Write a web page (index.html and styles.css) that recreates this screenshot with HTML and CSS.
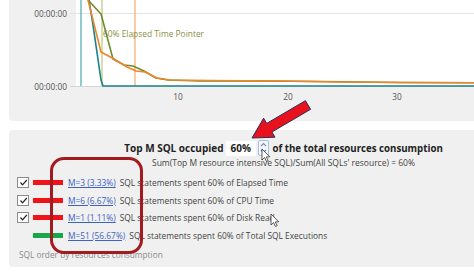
FILE: index.html
```html
<!DOCTYPE html>
<html lang="en">
<head>
    <meta charset="UTF-8">
    <meta name="viewport" content="width=device-width, initial-scale=1.0">
    <title>Top M SQL</title>
    <link rel="stylesheet" href="styles.css">
</head>
<body>
<div class="page">

    <section class="chart-panel">
        <svg class="chart" width="549" height="121" viewBox="9 0 549 121">
            <rect x="76" y="0" width="482" height="86" fill="#fff"/>
            <line x1="70" y1="13.5" x2="558" y2="13.5" class="grid"/>
            <line x1="70" y1="86.5" x2="558" y2="86.5" class="axis"/>

            <text x="67" y="16.5" class="tick" text-anchor="end">00:00:00</text>
            <text x="67" y="89.5" class="tick" text-anchor="end">00:00:00</text>
            <text x="178" y="100" class="tick" text-anchor="middle">10</text>
            <text x="288" y="100" class="tick" text-anchor="middle">20</text>
            <text x="397" y="100" class="tick" text-anchor="middle">30</text>

            <!-- pointers -->
            <line x1="81" y1="0" x2="81" y2="86" stroke="#4aa9ad" stroke-width="1.2"/>
            <line x1="102" y1="0" x2="102" y2="86" stroke="#b4bb5c" stroke-width="1"/>
            <line x1="135" y1="0" x2="135" y2="86" stroke="#f5ab6a" stroke-width="1.2"/>
            <text x="103" y="37" class="pointer-label">60% Elapsed Time Pointer</text>

            <!-- series -->
            <polyline class="series" stroke="#1b8287"
                points="89,0 93,25 101,80 103,86 558,86"/>
            <polyline class="series" stroke="#6f8c2c"
                points="88,0 101,14 113,59 124,65 133,66 144,71 156,78 168,80 200,81 260,81 320,81.5 360,82 400,82.5 558,83"/>
            <polyline class="series" stroke="#f0842a"
                points="88,0 101,52 114,59 127,67 136,71 145,72 157,78 170,80 210,80.5 280,81 340,82 400,82.5 558,83"/>
        </svg>
    </section>

    <section class="topm-panel">
        <div class="topm-title">
            <span>Top M SQL occupied</span>
            <span class="pct-input">60%</span>
            <span class="spinner">
                <svg width="9" height="14" viewBox="0 0 9 14">
                    <polyline points="2,5 4.5,2.5 7,5" fill="none" stroke="#7a8da8" stroke-width="1.1"/>
                    <polyline points="2,9 4.5,11.5 7,9" fill="none" stroke="#4d78c0" stroke-width="1.1"/>
                </svg>
            </span>
            <span class="title-rest">of the total resources consumption</span>
        </div>
        <div class="topm-formula">Sum(Top M resource intensive SQL)/Sum(All SQLs' resource) = 60%</div>

        <ul class="topm-list">
            <li class="topm-row">
                <span class="check"><svg width="9" height="9" viewBox="0 0 9 9"><polyline points="1.5,4.5 3.5,6.8 7.8,2" fill="none" stroke="#222" stroke-width="1.2"/></svg></span>
                <span class="bar bar-red"></span>
                <a href="#" class="m-link">M=3 (3.33%)</a>
                <span class="row-text">SQL statements spent 60% of Elapsed Time</span>
            </li>
            <li class="topm-row">
                <span class="check"><svg width="9" height="9" viewBox="0 0 9 9"><polyline points="1.5,4.5 3.5,6.8 7.8,2" fill="none" stroke="#222" stroke-width="1.2"/></svg></span>
                <span class="bar bar-red"></span>
                <a href="#" class="m-link">M=6 (6.67%)</a>
                <span class="row-text">SQL statements spent 60% of CPU Time</span>
            </li>
            <li class="topm-row">
                <span class="check"><svg width="9" height="9" viewBox="0 0 9 9"><polyline points="1.5,4.5 3.5,6.8 7.8,2" fill="none" stroke="#222" stroke-width="1.2"/></svg></span>
                <span class="bar bar-red"></span>
                <a href="#" class="m-link">M=1 (1.11%)</a>
                <span class="row-text">SQL statements spent 60% of Disk Read</span>
            </li>
            <li class="topm-row">
                <span class="check check-none"></span>
                <span class="bar bar-green"></span>
                <a href="#" class="m-link">M=51 (56.67%)</a>
                <span class="row-text">SQL statements spent 60% of Total SQL Executions</span>
            </li>
        </ul>

        <div class="topm-note">SQL order by resources consumption</div>

        <div class="callout"></div>
    </section>

    <!-- annotations drawn over the screenshot -->
    <svg class="overlay" width="474" height="276" viewBox="0 0 474 276">
        <polygon points="305.4,100.7 310.6,109.3 271.9,132.0 275.0,137.2 252,138 263.6,118.2 266.7,123.4"
            fill="#e8121c" stroke="#2b2b5c" stroke-width="1" stroke-linejoin="round"/>
        <path d="M262 149 L262 160 L264.6 157.6 L266.5 161.5 L268.2 160.7 L266.3 156.9 L269.8 156.9 Z"
            fill="#fff" stroke="#333" stroke-width="0.8"/>
        <path d="M271 214 L271 225 L273.6 222.6 L275.5 226.5 L277.2 225.7 L275.3 221.9 L278.8 221.9 Z"
            fill="#fff" stroke="#333" stroke-width="0.8"/>
    </svg>

</div>
</body>
</html>
```

FILE: styles.css
```css
* {
    margin: 0;
    padding: 0;
    box-sizing: border-box;
}

body {
    background: #fff;
    overflow: hidden;
    font-family: "Open Sans", "Noto Sans", sans-serif;
    color: #333;
}

.page {
    position: relative;
    width: 549px;
    margin-left: 9px;
}

/* chart */

.chart-panel {
    height: 121px;
    background: #f0f0f0;
    border-radius: 0 0 4px 4px;
}

.chart {
    display: block;
}

.chart .grid {
    stroke: #e3e3e3;
    stroke-width: 1;
}

.chart .axis {
    stroke: #d4d4d4;
    stroke-width: 1;
}

.chart .tick {
    font-family: "Open Sans", sans-serif;
    font-size: 8.3px;
    fill: #555;
}

.chart .pointer-label {
    font-family: "Open Sans", sans-serif;
    font-size: 8.4px;
    fill: #8d8f45;
}

.chart .series {
    fill: none;
    stroke-width: 1.6;
    stroke-linejoin: round;
}

/* top M panel */

.topm-panel {
    position: relative;
    margin-top: 9px;
    height: 137px;
    background: #f0f0f0;
    border-radius: 4px;
    padding-top: 10px;
}

.topm-title {
    display: flex;
    justify-content: center;
    align-items: center;
    height: 16px;
    font-size: 10px;
    font-weight: bold;
    color: #222;
}

.title-rest {
    font-size: 9.7px;
}

.pct-input {
    display: flex;
    align-items: center;
    height: 15px;
    width: 30px;
    margin-left: 2px;
    padding-left: 5px;
    background: #fff;
}

.spinner {
    display: flex;
    align-items: center;
    justify-content: center;
    width: 11px;
    height: 16px;
    margin: 0 4px 0 2px;
    border: 1px solid #a9bedb;
    border-radius: 2px;
    background: #f4f7fb;
}

.spinner svg {
    display: block;
}

.topm-formula {
    height: 14px;
    line-height: 14px;
    text-align: center;
    font-size: 8.5px;
    color: #444;
}

.topm-list {
    list-style: none;
    margin-top: 4px;
    padding-left: 8px;
}

.topm-row {
    display: flex;
    align-items: center;
    height: 17.5px;
    font-size: 8.4px;
    color: #444;
    white-space: nowrap;
}

.check {
    display: flex;
    align-items: center;
    justify-content: center;
    width: 12px;
    height: 11px;
    margin-right: 4px;
    border: 1px solid #8c8c8c;
    background: #fff;
}

.check-none {
    visibility: hidden;
}

.bar {
    width: 30px;
    height: 5px;
    margin-right: 5px;
}

.bar-red {
    background: #f01418;
}

.bar-green {
    background: #16a84a;
}

.m-link {
    color: #3d62c4;
    text-decoration: underline;
}

.row-text {
    margin-left: 4px;
}

.topm-note {
    margin-top: 4px;
    padding-left: 10px;
    height: 14px;
    line-height: 14px;
    font-size: 8.3px;
    color: #8a8a8a;
}

.callout {
    position: absolute;
    left: 41px;
    top: 27px;
    width: 93px;
    height: 97px;
    border: 3px solid #a21c1f;
    border-radius: 14px;
}

.overlay {
    position: absolute;
    left: -9px;
    top: 0;
    pointer-events: none;
}
```
